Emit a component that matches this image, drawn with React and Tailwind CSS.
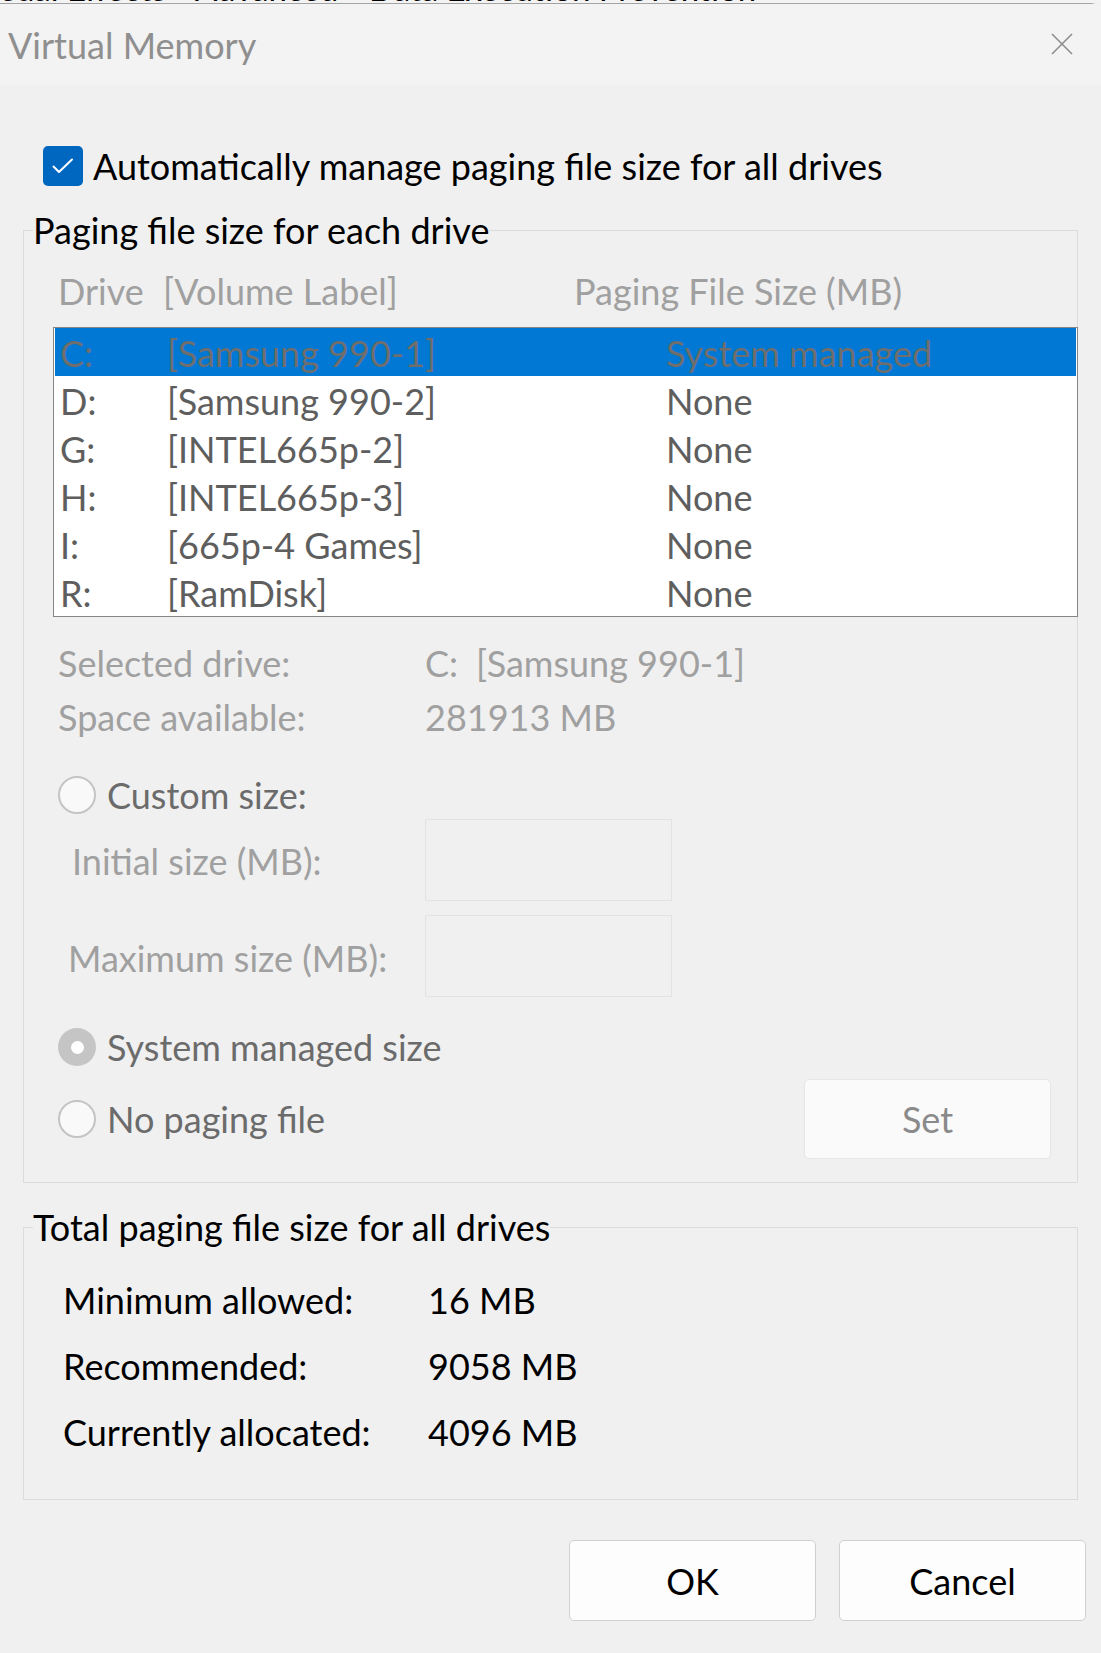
const drives = [
  { letter: "C:", label: "[Samsung 990-1]", size: "System managed", selected: true },
  { letter: "D:", label: "[Samsung 990-2]", size: "None" },
  { letter: "G:", label: "[INTEL665p-2]", size: "None" },
  { letter: "H:", label: "[INTEL665p-3]", size: "None" },
  { letter: "I:", label: "[665p-4 Games]", size: "None" },
  { letter: "R:", label: "[RamDisk]", size: "None" },
];

function Radio({ checked }) {
  if (checked) {
    return (
      <span className="flex h-[38px] w-[38px] shrink-0 items-center justify-center rounded-full bg-[#c5c5c5]">
        <span className="h-[13px] w-[13px] rounded-full bg-white" />
      </span>
    );
  }
  return <span className="h-[38px] w-[38px] shrink-0 rounded-full border-2 border-[#c4c4c4] bg-[#f9f9f9]" />;
}

export default function App() {
  return (
    <div className="min-h-[1653px] w-[1101px] overflow-hidden bg-[#f0f0f0] text-[36px] leading-[48px] text-black [font-family:Lato,'Noto_Sans',sans-serif]">
      {/* tab strip of the parent dialog, mostly hidden */}
      <div className="h-[3px] overflow-hidden bg-[#f3f3f3] text-[33px]">
        <div className="-mt-[36px] flex whitespace-nowrap">
          <div className="flex w-[166px] shrink-0 justify-end">Visual Effects</div>
          <div className="ml-[29px] w-[174px] shrink-0">Advanced</div>
          <div>Data Execution Prevention</div>
        </div>
      </div>

      <div className="rounded-tr-[10px] border-t border-[#a3a3a3]">
        {/* title bar */}
        <div className="flex h-[81px] items-center justify-between bg-[#f3f3f3] pl-[8px] pr-[28px]">
          <span className="text-[#8f8f8f]">Virtual Memory</span>
          <svg width="22" height="22" viewBox="0 0 22 22" className="mt-[-2px]">
            <path d="M1 1 L21 21 M21 1 L1 21" stroke="#8d8d8d" strokeWidth="1.6" fill="none" />
          </svg>
        </div>

        {/* auto manage */}
        <div className="mt-[57px] flex h-[48px] items-center pl-[43px]">
          <span className="flex h-[40px] w-[40px] items-center justify-center rounded-[5px] bg-[#0067c0]">
            <svg width="40" height="40" viewBox="0 0 40 40">
              <path d="M10.5 20.5 L16 26 L29 13.5" stroke="#fff" strokeWidth="2" fill="none" strokeLinecap="round" strokeLinejoin="round" />
            </svg>
          </span>
          <span className="ml-[10px]">Automatically manage paging file size for all drives</span>
        </div>

        {/* paging file size per drive */}
        <fieldset className="mx-[23px] mt-[16px] min-w-0 border border-[#dcdcdc] pb-[23px]">
          <legend className="ml-[9px] leading-[48px]">Paging file size for each drive</legend>

          <div className="mt-[13px] grid grid-cols-[105px_411px_1fr] pl-[34px] text-[#a0a0a0]">
            <span>Drive</span>
            <span>[Volume Label]</span>
            <span>Paging File Size (MB)</span>
          </div>

          <div className="mt-[12px] ml-[29px] mr-[-1px] border border-[#858585] bg-white px-px">
            {drives.map((d) => (
              <div
                key={d.letter}
                className={`grid h-[48px] grid-cols-[107px_499px_1fr] pl-[5px] pt-px ${d.selected ? "bg-[#0078d4] text-[#6e6e6e]" : "text-[#5e5e5e]"}`}
              >
                <span>{d.letter}</span>
                <span>{d.label}</span>
                <span>{d.size}</span>
              </div>
            ))}
          </div>

          <div className="mt-[19px] pl-[34px] leading-[54px] text-[#a0a0a0]">
            <div className="grid grid-cols-[367px_1fr]">
              <span>Selected drive:</span>
              <span>
                <span className="inline-block w-[51px]">C:</span>[Samsung 990-1]
              </span>
            </div>
            <div className="grid grid-cols-[367px_1fr]">
              <span>Space available:</span>
              <span>281913 MB</span>
            </div>
          </div>

          <div className="mt-[27px] flex h-[48px] items-center pl-[34px] text-[#6b6b6b]">
            <Radio />
            <span className="ml-[11px]">Custom size:</span>
          </div>

          <div className="grid grid-cols-[367px_247px] pl-[34px] text-[#a0a0a0]">
            <span className="mt-[18px] pl-[14px]">Initial size (MB):</span>
            <div className="h-[82px] border border-[#e3e3e3]" />
          </div>
          <div className="mt-[14px] grid grid-cols-[367px_247px] pl-[34px] text-[#a0a0a0]">
            <span className="mt-[19px] pl-[10px]">Maximum size (MB):</span>
            <div className="h-[82px] border border-[#e3e3e3]" />
          </div>

          <div className="mt-[26px] flex h-[48px] items-center pl-[34px] text-[#6b6b6b]">
            <Radio checked />
            <span className="ml-[11px]">System managed size</span>
          </div>

          <div className="mt-[8px] flex h-[80px] items-center justify-between pl-[34px] pr-[26px] text-[#6b6b6b]">
            <div className="flex items-center">
              <Radio />
              <span className="ml-[11px]">No paging file</span>
            </div>
            <button className="h-[80px] w-[247px] rounded-[5px] border border-[#e6e6e6] bg-[#fafafa] text-[#8a8a8a]">
              Set
            </button>
          </div>
        </fieldset>

        {/* totals */}
        <fieldset className="mx-[23px] mt-[20px] min-w-0 border border-[#dcdcdc] pb-[34px]">
          <legend className="ml-[9px] leading-[48px]">Total paging file size for all drives</legend>
          <div className="mt-[16px] pl-[39px] leading-[66px]">
            <div className="grid grid-cols-[365px_1fr]">
              <span>Minimum allowed:</span>
              <span>16 MB</span>
            </div>
            <div className="grid grid-cols-[365px_1fr]">
              <span>Recommended:</span>
              <span>9058 MB</span>
            </div>
            <div className="grid grid-cols-[365px_1fr]">
              <span>Currently allocated:</span>
              <span>4096 MB</span>
            </div>
          </div>
        </fieldset>

        <div className="mt-[40px] flex justify-end gap-[23px] pr-[15px]">
          <button className="h-[81px] w-[247px] rounded-[5px] border border-[#d0d0d0] bg-[#fdfdfd]">OK</button>
          <button className="h-[81px] w-[247px] rounded-[5px] border border-[#d0d0d0] bg-[#fdfdfd]">Cancel</button>
        </div>
      </div>
    </div>
  );
}
